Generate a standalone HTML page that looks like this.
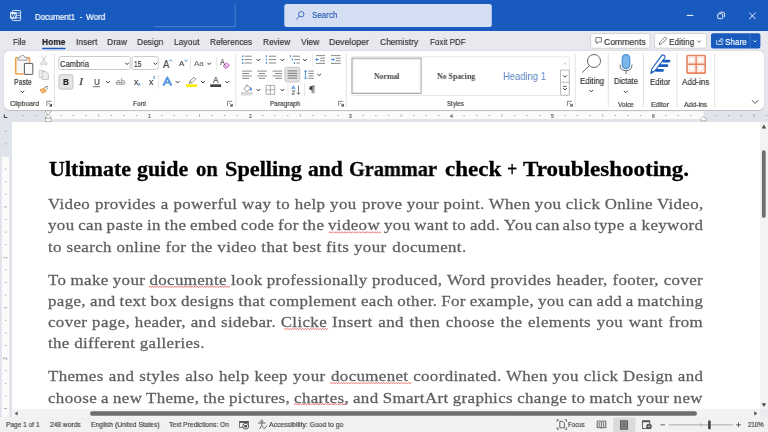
<!DOCTYPE html>
<html><head><meta charset="utf-8"><title>Document1 - Word</title>
<style>
*{box-sizing:border-box;margin:0;padding:0}
html,body{width:768px;height:432px;overflow:hidden;background:#e7e9ef;font-family:"Liberation Sans",sans-serif}
.a{position:absolute;white-space:nowrap}
.t{transform-origin:0 0;will-change:transform;-webkit-text-stroke:0.18px currentColor}
#title{left:0;top:0;width:768px;height:31px;background:#185abd}
#tabs{left:0;top:31px;width:768px;height:80px;background:#e7e9ef}
#ribbon{left:4px;top:51px;width:759.5px;height:58.7px;background:#fff;border-radius:5px;box-shadow:0 0.5px 1.5px rgba(0,0,0,.2)}
#ruler{left:0;top:111px;width:768px;height:11px;background:#dfe3ea}
#page{left:12px;top:122px;width:748px;height:287px;background:#fff}
#status{left:0;top:417px;width:768px;height:15px;background:#f1f1f1}
.s{font-family:"Liberation Serif",serif}
</style></head><body>
<div class="a" id="title"></div>
<div class="a" id="tabs"></div>
<div class="a" id="ribbon"></div>
<div class="a" id="ruler"></div>
<div class="a" id="page"></div>
<div class="a" id="status"></div>
<svg class="a" style="left:0;top:0" width="768" height="51" viewBox="0 0 768 51">
<rect x="12.3" y="10.5" width="8.3" height="10.1" rx="0.9" fill="none" stroke="#fff" stroke-width="0.9" opacity=".92"/>
<path d="M15 13.1H20.4M15 15.5H20.4M15 17.9H20.4" stroke="#fff" stroke-width="0.8" opacity=".8"/>
<rect x="10" y="12.1" width="6.7" height="6.7" rx="0.8" fill="#e3ebf8"/>
<path d="M11.2 13.8l1.05 3.5 1.1-3.2 1.1 3.2 1.05-3.5" fill="none" stroke="#185abd" stroke-width="0.95"/>
<path d="M153.5 26.7H235.2V4.5" fill="none" stroke="#5f8bd3" stroke-width="0.8"/>
<rect x="284.3" y="4" width="207.5" height="23" rx="2.5" fill="#d5dff3"/>
<circle cx="301.3" cy="14.2" r="2.7" fill="none" stroke="#2b5cb5" stroke-width="0.9"/>
<path d="M299.3 16.3L296.3 19.4" stroke="#2b5cb5" stroke-width="0.9" stroke-linecap="round"/>
<path d="M686.7 15.4H693.3" stroke="#fff" stroke-width="1"/>
<rect x="717.7" y="13.7" width="5" height="5" rx="1.3" fill="none" stroke="#fff" stroke-width="0.9"/>
<path d="M719.4 12.4Q719.8 12.2 720.4 12.2H723Q724.6 12.2 724.6 13.8V16.4Q724.6 17 724.3 17.4" fill="none" stroke="#fff" stroke-width="0.9"/>
<path d="M749.2 12.6L755.6 19M755.6 12.6L749.2 19" stroke="#fff" stroke-width="0.9"/>
<!-- home underline -->
<rect x="42" y="47.7" width="23.6" height="1.5" rx="0.7" fill="#185abd"/>
<!-- comments / editing / share buttons -->
<rect x="590.6" y="33.6" width="59.4" height="14.6" rx="2" fill="#fff" stroke="#c6c6c6" stroke-width="0.7"/>
<rect x="654.6" y="33.6" width="52" height="14.6" rx="2" fill="#fff" stroke="#c6c6c6" stroke-width="0.7"/>
<rect x="711" y="33.2" width="49.4" height="15.4" rx="2" fill="#185abd"/>
<path d="M750.2 33.4V48.4" stroke="#4a7fd0" stroke-width="0.6"/>
<!-- comment bubble icon -->
<path d="M595.8 37.6H601.4V42H598.2L596.8 43.6V42H595.8Z" fill="none" stroke="#444" stroke-width="0.7" stroke-linejoin="round"/>
<!-- pencil icon -->
<path d="M659.2 44.6L660 42.2L665.2 37L666.8 38.6L661.6 43.8Z" fill="none" stroke="#444" stroke-width="0.7" stroke-linejoin="round"/>
<!-- editing chevron -->
<path d="M697.6 40.6l1.6 1.6 1.6-1.6" fill="none" stroke="#444" stroke-width="0.8"/>
<!-- share icon -->
<path d="M716.6 40V44.4H722.4V42.6M718.6 41.8Q719 39.6 721.2 39.6V38.2L723.4 40.2L721.2 42.2V40.9Q719.6 40.8 718.6 41.8Z" fill="none" stroke="#fff" stroke-width="0.7" stroke-linejoin="round"/>
<path d="M753.4 40.4l1.6 1.6 1.6-1.6" fill="none" stroke="#fff" stroke-width="0.8"/>
</svg>

<svg class="a" style="left:0;top:51px" width="768" height="60" viewBox="0 51 768 60">
<path d="M54.40 53.5V107" stroke="#d9d9d9" stroke-width="0.8"/>
<path d="M235.80 53.5V107" stroke="#d9d9d9" stroke-width="0.8"/>
<path d="M346.30 53.5V107" stroke="#d9d9d9" stroke-width="0.8"/>
<path d="M575.20 53.5V107" stroke="#d9d9d9" stroke-width="0.8"/>
<path d="M608.30 53.5V107" stroke="#d9d9d9" stroke-width="0.8"/>
<path d="M643.40 53.5V107" stroke="#d9d9d9" stroke-width="0.8"/>
<path d="M676.90 53.5V107" stroke="#d9d9d9" stroke-width="0.8"/>
<path d="M714.60 53.5V107" stroke="#d9d9d9" stroke-width="0.8"/>
<rect x="16.2" y="58.2" width="12.8" height="15.2" fill="#f6f6f6"/>
<path d="M18.4 57.7H16.3Q15.7 57.7 15.7 58.3V73.4Q15.7 74 16.3 74H23.8M26.8 57.7H28.9Q29.5 57.7 29.5 58.3V62.6" fill="none" stroke="#f0a24a" stroke-width="1.6"/>
<path d="M18.1 60.2V57.8Q18.1 57.2 18.7 57.2H20.4Q20.7 55.1 22.55 55.1Q24.4 55.1 24.7 57.2H26.4Q27 57.2 27 57.8V60.2Z" fill="#f0f0f0" stroke="#8f8f8f" stroke-width="0.8"/>
<rect x="24.4" y="63.4" width="8.4" height="11" rx="0.5" fill="#fafafa" stroke="#5a5a5a" stroke-width="1"/>
<path d="M20.60 90.70l1.80 1.90 1.80-1.90" fill="none" stroke="#3a3a3a" stroke-width="1.0"/>
<path d="M41.4 55.4L45.4 62.6M46.2 55.4L42.2 62.6" stroke="#b5b5b5" stroke-width="0.7"/><circle cx="41.8" cy="63.8" r="1.3" fill="none" stroke="#b5b5b5" stroke-width="0.7"/><circle cx="45.8" cy="63.8" r="1.3" fill="none" stroke="#b5b5b5" stroke-width="0.7"/>
<path d="M39.2 70.4H43.6V77.6H39.2Z" fill="#f2f2f2" stroke="#bdbdbd" stroke-width="0.7"/><path d="M42.2 71.6H46L48.4 74V79.6H42.2Z" fill="#ececec" stroke="#b5b5b5" stroke-width="0.7"/>
<path d="M39.4 89.6L44.2 87.4L46.6 91.8L42.6 94Z" fill="#f0a24a"/><path d="M41.8 88.6L44.4 93" stroke="#fff" stroke-width="0.6"/><path d="M44.2 87.6L46 86.4L47.6 88.6L46 90.2" fill="#eee" stroke="#777" stroke-width="0.7"/><path d="M46.6 87L48.2 86" stroke="#777" stroke-width="1"/>
<path d="M46.80 105.90V101.30H51.40" fill="none" stroke="#555" stroke-width="0.7"/>
<path d="M48.60 103.10L51.00 105.50" fill="none" stroke="#444" stroke-width="0.8"/>
<path d="M52.00 103.50V106.50H49.00Z" fill="#3a3a3a"/>
<rect x="58.9" y="56.5" width="71.4" height="13" rx="1.8" fill="#fff" stroke="#bfbfbf" stroke-width="0.8"/>
<rect x="132.1" y="56.5" width="26.2" height="13" rx="1.8" fill="#fff" stroke="#bfbfbf" stroke-width="0.8"/>
<path d="M125.20 62.70l1.80 1.90 1.80-1.90" fill="none" stroke="#3a3a3a" stroke-width="1.0"/>
<path d="M153.60 62.70l1.80 1.90 1.80-1.90" fill="none" stroke="#3a3a3a" stroke-width="1.0"/>
<rect x="58.9" y="74.7" width="14" height="14.5" rx="2" fill="#e4e4e4" stroke="#b9b9b9" stroke-width="0.8"/>
<path d="M92.9 86.7H100" stroke="#444" stroke-width="0.8"/>
<path d="M106.00 81.10l1.80 1.90 1.80-1.90" fill="none" stroke="#3a3a3a" stroke-width="1.0"/>
<path d="M114.8 82.6H125.2" stroke="#9a9a9a" stroke-width="0.7"/>
<path d="M158.60 75V89.2" stroke="#e0e0e0" stroke-width="0.8"/>
<path d="M169.3 61.4l1.4-1.7 1.4 1.7" fill="none" stroke="#2b7cd3" stroke-width="0.8"/>
<path d="M184.6 59.7l1.4 1.7 1.4-1.7" fill="none" stroke="#2b7cd3" stroke-width="0.8"/>
<path d="M190.50 57V70" stroke="#e0e0e0" stroke-width="0.8"/>
<path d="M207.40 62.70l1.80 1.90 1.80-1.90" fill="none" stroke="#3a3a3a" stroke-width="1.0"/>
<path d="M216.60 57V70" stroke="#e0e0e0" stroke-width="0.8"/>
<path d="M223.2 66.2L226.6 62.8L229.4 65.2L226 68.6Z" fill="#f3d6f4" stroke="#c25ac6" stroke-width="1"/><path d="M224.6 64.8L227.4 67.2" stroke="#c25ac6" stroke-width="0.8"/>
<path d="M163.4 85.6L167.3 77.4L171.4 85.6M165 82.6H169.6" fill="none" stroke="#2b7cd3" stroke-width="1.9" stroke-linejoin="round"/><path d="M163.4 85.6L167.3 77.4L171.4 85.6M165 82.6H169.6" fill="none" stroke="#8ec0f2" stroke-width="0.6"/>
<path d="M175.80 81.10l1.80 1.90 1.80-1.90" fill="none" stroke="#3a3a3a" stroke-width="1.0"/>
<path d="M189 83.4L190 80.8L194.2 77.2L195.8 78.8L192 82.8Z" fill="#fff" stroke="#666" stroke-width="0.7" stroke-linejoin="round"/><path d="M190 80.8L192 82.8" stroke="#666" stroke-width="0.7"/>
<rect x="186.1" y="84.3" width="10.9" height="2.7" fill="#ffed00"/>
<path d="M201.20 81.10l1.80 1.90 1.80-1.90" fill="none" stroke="#3a3a3a" stroke-width="1.0"/>
<rect x="210.3" y="84.3" width="10.8" height="2.7" fill="#444"/>
<path d="M225.40 81.10l1.80 1.90 1.80-1.90" fill="none" stroke="#3a3a3a" stroke-width="1.0"/>
<path d="M227.50 105.90V101.30H232.10" fill="none" stroke="#555" stroke-width="0.7"/>
<path d="M229.30 103.10L231.70 105.50" fill="none" stroke="#444" stroke-width="0.8"/>
<path d="M232.70 103.50V106.50H229.70Z" fill="#3a3a3a"/>
<path d="M244.60 56.20H251.80M244.60 59.60H251.80M244.60 63.00H251.80" stroke="#6a6a6a" stroke-width="0.8"/>
<path d="M242 56.2H243.4M242 59.6H243.4M242 63H243.4" stroke="#2b7cd3" stroke-width="1.3"/>
<path d="M256.60 59.00l1.80 1.90 1.80-1.90" fill="none" stroke="#3a3a3a" stroke-width="1.0"/>
<path d="M268.80 56.20H276.10M268.80 59.60H276.10M268.80 63.00H276.10" stroke="#6a6a6a" stroke-width="0.8"/>
<path d="M266.4 55.2V57.2M266.4 58.6V60.6M266.4 62V64" stroke="#2b7cd3" stroke-width="0.9"/>
<path d="M280.60 59.00l1.80 1.90 1.80-1.90" fill="none" stroke="#3a3a3a" stroke-width="1.0"/>
<path d="M292.40 56.20H300.00" stroke="#6a6a6a" stroke-width="0.8"/>
<path d="M294.40 59.60H300.00" stroke="#6a6a6a" stroke-width="0.8"/>
<path d="M296.40 63.00H300.00" stroke="#6a6a6a" stroke-width="0.8"/>
<path d="M290.4 55.2V57.2M292.4 58.6V60.6M294.4 62V64" stroke="#2b7cd3" stroke-width="0.9"/>
<path d="M303.20 59.00l1.80 1.90 1.80-1.90" fill="none" stroke="#3a3a3a" stroke-width="1.0"/>
<path d="M312.80 54V65.8" stroke="#e0e0e0" stroke-width="0.8"/>
<path d="M316.00 55.60H325.00M316.00 63.40H325.00" stroke="#6a6a6a" stroke-width="0.8"/>
<path d="M320.20 58.20H325.00M320.20 60.80H325.00" stroke="#6a6a6a" stroke-width="0.8"/>
<path d="M319 59.5H315.8M317.2 58L315.8 59.5L317.2 61" fill="none" stroke="#2b7cd3" stroke-width="0.8"/>
<path d="M331.00 55.60H340.60M331.00 63.40H340.60" stroke="#6a6a6a" stroke-width="0.8"/>
<path d="M335.60 58.20H340.60M335.60 60.80H340.60" stroke="#6a6a6a" stroke-width="0.8"/>
<path d="M331 59.5H334.2M332.8 58L334.2 59.5L332.8 61" fill="none" stroke="#2b7cd3" stroke-width="0.8"/>
<path d="M242.20 71.10H251.80M242.20 73.50H249.20M242.20 75.90H251.80M242.20 78.30H249.20" stroke="#6a6a6a" stroke-width="0.8"/>
<path d="M257.20 71.10H266.80M258.90 73.50H265.10M257.20 75.90H266.80M258.90 78.30H265.10" stroke="#6a6a6a" stroke-width="0.8"/>
<path d="M272.60 71.10H282.00M275.20 73.50H282.00M272.60 75.90H282.00M275.20 78.30H282.00" stroke="#6a6a6a" stroke-width="0.8"/>
<rect x="285" y="67.4" width="14.8" height="14.5" rx="2" fill="#e4e4e4" stroke="#b9b9b9" stroke-width="0.8"/>
<path d="M287.60 70.90H297.40M287.60 73.30H297.40M287.60 75.70H297.40M287.60 78.10H297.40" stroke="#5a5a5a" stroke-width="0.8"/>
<path d="M305.6 70.4V79M304.2 71.8L305.6 70.4L307 71.8M304.2 77.6L305.6 79L307 77.6" fill="none" stroke="#2b7cd3" stroke-width="0.8"/>
<path d="M308.40 71.10H313.80M308.40 73.50H313.80M308.40 75.90H313.80M308.40 78.30H313.80" stroke="#6a6a6a" stroke-width="0.8"/>
<path d="M317.40 73.80l1.80 1.90 1.80-1.90" fill="none" stroke="#3a3a3a" stroke-width="1.0"/>
<path d="M244 88.6L247.4 85.2L250.6 88.4L247.2 91.6Z" fill="#fff" stroke="#666" stroke-width="0.7" stroke-linejoin="round"/><path d="M246.4 86.2V84.6" stroke="#666" stroke-width="0.7"/><path d="M250.8 87.4Q252.2 89.4 251.2 90.4Q250 90.6 250.4 88.6Z" fill="#2b7cd3" stroke="#2b7cd3" stroke-width="0.5"/>
<rect x="241.6" y="92.4" width="10.4" height="2.6" fill="#dedede" stroke="#bdbdbd" stroke-width="0.5"/>
<path d="M256.60 89.00l1.80 1.90 1.80-1.90" fill="none" stroke="#3a3a3a" stroke-width="1.0"/>
<path d="M266.1 85.4H274.7V94.3H266.1ZM270.4 85.4V94.3M266.1 89.85H274.7" fill="none" stroke="#8a8a8a" stroke-width="0.7"/>
<path d="M280.60 89.00l1.80 1.90 1.80-1.90" fill="none" stroke="#3a3a3a" stroke-width="1.0"/>
<path d="M288.00 83V96.4" stroke="#e0e0e0" stroke-width="0.8"/>
<path d="M291.7 89.2L293.4 85.8L295.1 89.2M292.3 88.1H294.5" fill="none" stroke="#2b7cd3" stroke-width="0.8"/>
<path d="M291.9 90.8H294.9L291.9 94.2H294.9" fill="none" stroke="#555" stroke-width="0.8"/>
<path d="M298.5 85.6V94.2M296.9 92.6L298.5 94.4L300.1 92.6" fill="none" stroke="#555" stroke-width="0.8"/>
<path d="M304.60 83V96.4" stroke="#e0e0e0" stroke-width="0.8"/>
<path d="M312.2 93.2V86H314.6M313.9 93.2V86" fill="none" stroke="#444" stroke-width="0.8"/><path d="M312.4 86H311.6Q309.2 86 309.2 88.2Q309.2 90.2 311.6 90.2H312.4Z" fill="#444"/>
<path d="M338.60 105.90V101.30H343.20" fill="none" stroke="#555" stroke-width="0.7"/>
<path d="M340.40 103.10L342.80 105.50" fill="none" stroke="#444" stroke-width="0.8"/>
<path d="M343.80 103.50V106.50H340.80Z" fill="#3a3a3a"/>
<rect x="351.4" y="56.8" width="218" height="38.6" rx="1.5" fill="#fff" stroke="#dedede" stroke-width="0.8"/>
<rect x="352.1" y="58.2" width="69" height="35.2" fill="#fff" stroke="#a8a8a8" stroke-width="1.1"/>
<rect x="353.1" y="59.2" width="67" height="33.2" fill="none" stroke="#e2e2e2" stroke-width="0.7"/>
<path d="M560.5 70.1H569.3V82.3H560.5ZM560.5 82.3V94.4Q560.5 95.3 561.4 95.3H568.4Q569.3 95.3 569.3 94.4V82.3" fill="#fff" stroke="#a0a0a0" stroke-width="0.7"/>
<path d="M563.2 64.6l1.7-1.8 1.7 1.8" fill="none" stroke="#c4c4c4" stroke-width="0.8"/>
<path d="M563.20 75.40l1.80 1.90 1.80-1.90" fill="none" stroke="#3a3a3a" stroke-width="1.0"/>
<path d="M563 86.4H566.8" stroke="#444" stroke-width="0.8"/>
<path d="M563.20 88.20l1.80 1.70 1.80-1.70" fill="none" stroke="#3a3a3a" stroke-width="1.0"/>
<path d="M567.40 105.90V101.30H572.00" fill="none" stroke="#555" stroke-width="0.7"/>
<path d="M569.20 103.10L571.60 105.50" fill="none" stroke="#444" stroke-width="0.8"/>
<path d="M572.60 103.50V106.50H569.60Z" fill="#3a3a3a"/>
<circle cx="594" cy="61" r="6.5" fill="none" stroke="#555" stroke-width="0.9"/><path d="M589.3 65.7L582.2 72.6" stroke="#555" stroke-width="0.9"/>
<path d="M589.50 90.00l1.80 1.90 1.80-1.90" fill="none" stroke="#3a3a3a" stroke-width="1.0"/>
<rect x="622.2" y="54.4" width="7.6" height="14.4" rx="3.8" fill="#7db7ea" stroke="#2b7cd3" stroke-width="0.9"/>
<path d="M620 64.6Q620 70.7 626 70.7Q632 70.7 632 64.6M626 70.7V74" fill="none" stroke="#555" stroke-width="0.9"/>
<path d="M623.90 90.80l1.80 1.90 1.80-1.90" fill="none" stroke="#3a3a3a" stroke-width="1.0"/>
<path d="M650.8 73.4L652 68.8L661.6 55.6Q662.6 54.4 663.8 55.2L664.6 55.8Q665.6 56.8 664.8 58L655 70.8Z" fill="#fff" stroke="#185abd" stroke-width="1.1" stroke-linejoin="round"/>
<path d="M650.8 73.4L651.5 70.6L653.6 72.2Z" fill="#185abd"/>
<path d="M663.4 61.1H669M659.8 65.6H667M656.4 70.4H662.6" stroke="#185abd" stroke-width="2.6" stroke-linecap="round"/>
<rect x="687" y="55.5" width="18.2" height="17.6" rx="0.8" fill="#fff" stroke="#e8815c" stroke-width="1.6"/>
<path d="M696.1 55.5V73.1M687 64.3H705.2" stroke="#e8815c" stroke-width="1.4"/>
<path d="M689 57.4H694.4V62.6H689ZM697.8 57.4H703.2V62.6H697.8ZM689 66H694.4V71.2H689ZM697.8 66H703.2V71.2H697.8Z" fill="#fff" stroke="#f3b9a2" stroke-width="0.5"/>
<path d="M752.00 100.20l3.00 3.20 3.00-3.20" fill="none" stroke="#3a3a3a" stroke-width="0.9"/>
</svg>
<svg class="a" style="left:0;top:109px" width="768" height="309" viewBox="0 109 768 309">
<rect x="48.3" y="111.2" width="655.2" height="7.9" fill="#fbfbfc"/>
<path d="M4.4 114.4V117.5H7.3" fill="none" stroke="#444" stroke-width="1.1"/>
<path d="M22.40 115.55H23.80M35.00 115.55H36.40M60.20 115.55H61.60M72.80 115.55H74.20M85.40 115.55H86.80M110.60 115.55H112.00M123.20 115.55H124.60M135.80 115.55H137.20M161.00 115.55H162.40M173.60 115.55H175.00M186.20 115.55H187.60M211.40 115.55H212.80M224.00 115.55H225.40M236.60 115.55H238.00M261.80 115.55H263.20M274.40 115.55H275.80M287.00 115.55H288.40M312.20 115.55H313.60M324.80 115.55H326.20M337.40 115.55H338.80M362.60 115.55H364.00M375.20 115.55H376.60M387.80 115.55H389.20M413.00 115.55H414.40M425.60 115.55H427.00M438.20 115.55H439.60M463.40 115.55H464.80M476.00 115.55H477.40M488.60 115.55H490.00M513.80 115.55H515.20M526.40 115.55H527.80M539.00 115.55H540.40M564.20 115.55H565.60M576.80 115.55H578.20M589.40 115.55H590.80M614.60 115.55H616.00M627.20 115.55H628.60M639.80 115.55H641.20M665.00 115.55H666.40M677.60 115.55H679.00M690.20 115.55H691.60M715.40 115.55H716.80M728.00 115.55H729.40M740.60 115.55H742.00M765.80 115.55H767.20" stroke="#9a9da2" stroke-width="0.9"/>
<path d="M98.70 114.2V116.8M199.50 114.2V116.8M300.30 114.2V116.8M401.10 114.2V116.8M501.90 114.2V116.8M602.70 114.2V116.8M753.90 114.2V116.8" stroke="#8a8d92" stroke-width="0.7"/>
<path d="M45.5 110.8H51.099999999999994V112L48.3 114.6L45.5 112Z" fill="#fff" stroke="#8a8a8a" stroke-width="0.6"/>
<path d="M45.5 118.2V117L48.3 114.6L51.099999999999994 117V118.2Z" fill="#fff" stroke="#8a8a8a" stroke-width="0.6"/>
<rect x="45.5" y="118.2" width="5.6" height="3.4" fill="#fff" stroke="#8a8a8a" stroke-width="0.6"/>
<path d="M700.7 120.8V119.2L703.5 116.4L706.3 119.2V120.8Z" fill="#fff" stroke="#8a8a8a" stroke-width="0.6"/>
<rect x="0" y="122" width="12" height="295" fill="#dfe3ea"/>
<rect x="1.9" y="156.8" width="7.4" height="260" fill="#fbfbfc"/>
<path d="M4.8 131.30H6.4M4.8 143.90H6.4M4.8 169.10H6.4M4.8 181.70H6.4M4.8 194.30H6.4M4.2 206.90H7M4.8 219.50H6.4M4.8 232.10H6.4M4.8 244.70H6.4M4.8 269.90H6.4M4.8 282.50H6.4M4.8 295.10H6.4M4.2 307.70H7M4.8 320.30H6.4M4.8 332.90H6.4M4.8 345.50H6.4M4.8 370.70H6.4M4.8 383.30H6.4M4.8 395.90H6.4M4.2 408.50H7" stroke="#8a8d92" stroke-width="0.7"/>
<rect x="760" y="122" width="8" height="287" fill="#f3f3f3"/>
<rect x="761.9" y="150.2" width="3.8" height="67.6" rx="1.9" fill="#6e6e6e"/>
<path d="M761.6 128.4L763.9 124.6L766.2 128.4Z" fill="#505050"/>
<path d="M761.6 403.2L763.9 407L766.2 403.2Z" fill="#505050"/>
<rect x="12" y="409" width="748" height="8.2" fill="#f3f3f3"/>
<rect x="760" y="409" width="8" height="8.2" fill="#e9ebf0"/>
<rect x="90" y="411.3" width="607" height="4.4" rx="2.2" fill="#6e6e6e"/>
<path d="M17.6 411.6L14.6 413.6L17.6 415.6Z" fill="#555"/>
<path d="M754.2 411.2L757.4 413.4L754.2 415.6Z" fill="#555"/>
<path d="M328.60 233.15L329.85 231.65L331.10 233.15L332.35 231.65L333.60 233.15L334.85 231.65L336.10 233.15L337.35 231.65L338.60 233.15L339.85 231.65L341.10 233.15L342.35 231.65L343.60 233.15L344.85 231.65L346.10 233.15L347.35 231.65L348.60 233.15L349.85 231.65L351.10 233.15L352.35 231.65L353.60 233.15L354.85 231.65L356.10 233.15L357.35 231.65L358.60 233.15L359.85 231.65L361.10 233.15L362.35 231.65L363.60 233.15L364.85 231.65L366.10 233.15L367.35 231.65L368.60 233.15L369.85 231.65L371.10 233.15L372.35 231.65L373.60 233.15L374.85 231.65L376.10 233.15L377.35 231.65L378.60 233.15L379.85 231.65L381.10 233.15" fill="none" stroke="#e8403a" stroke-width="0.75" opacity=".85"/>
<path d="M148.60 287.55L149.85 286.05L151.10 287.55L152.35 286.05L153.60 287.55L154.85 286.05L156.10 287.55L157.35 286.05L158.60 287.55L159.85 286.05L161.10 287.55L162.35 286.05L163.60 287.55L164.85 286.05L166.10 287.55L167.35 286.05L168.60 287.55L169.85 286.05L171.10 287.55L172.35 286.05L173.60 287.55L174.85 286.05L176.10 287.55L177.35 286.05L178.60 287.55L179.85 286.05L181.10 287.55L182.35 286.05L183.60 287.55L184.85 286.05L186.10 287.55L187.35 286.05L188.60 287.55L189.85 286.05L191.10 287.55L192.35 286.05L193.60 287.55L194.85 286.05L196.10 287.55L197.35 286.05L198.60 287.55L199.85 286.05L201.10 287.55L202.35 286.05L203.60 287.55L204.85 286.05L206.10 287.55L207.35 286.05L208.60 287.55L209.85 286.05L211.10 287.55L212.35 286.05L213.60 287.55L214.85 286.05L216.10 287.55L217.35 286.05L218.60 287.55L219.85 286.05L221.10 287.55L222.35 286.05L223.60 287.55L224.85 286.05L226.10 287.55L227.35 286.05L228.60 287.55L229.85 286.05" fill="none" stroke="#e8403a" stroke-width="0.75" opacity=".85"/>
<path d="M284.00 329.75L285.25 328.25L286.50 329.75L287.75 328.25L289.00 329.75L290.25 328.25L291.50 329.75L292.75 328.25L294.00 329.75L295.25 328.25L296.50 329.75L297.75 328.25L299.00 329.75L300.25 328.25L301.50 329.75L302.75 328.25L304.00 329.75L305.25 328.25L306.50 329.75L307.75 328.25L309.00 329.75L310.25 328.25L311.50 329.75L312.75 328.25L314.00 329.75L315.25 328.25L316.50 329.75L317.75 328.25L319.00 329.75L320.25 328.25L321.50 329.75L322.75 328.25L324.00 329.75L325.25 328.25L326.50 329.75L327.75 328.25" fill="none" stroke="#e8403a" stroke-width="0.75" opacity=".85"/>
<path d="M330.00 383.85L331.25 382.35L332.50 383.85L333.75 382.35L335.00 383.85L336.25 382.35L337.50 383.85L338.75 382.35L340.00 383.85L341.25 382.35L342.50 383.85L343.75 382.35L345.00 383.85L346.25 382.35L347.50 383.85L348.75 382.35L350.00 383.85L351.25 382.35L352.50 383.85L353.75 382.35L355.00 383.85L356.25 382.35L357.50 383.85L358.75 382.35L360.00 383.85L361.25 382.35L362.50 383.85L363.75 382.35L365.00 383.85L366.25 382.35L367.50 383.85L368.75 382.35L370.00 383.85L371.25 382.35L372.50 383.85L373.75 382.35L375.00 383.85L376.25 382.35L377.50 383.85L378.75 382.35L380.00 383.85L381.25 382.35L382.50 383.85L383.75 382.35L385.00 383.85L386.25 382.35L387.50 383.85L388.75 382.35L390.00 383.85L391.25 382.35L392.50 383.85L393.75 382.35L395.00 383.85L396.25 382.35L397.50 383.85L398.75 382.35L400.00 383.85L401.25 382.35L402.50 383.85L403.75 382.35L405.00 383.85L406.25 382.35L407.50 383.85L408.75 382.35L410.00 383.85L411.25 382.35" fill="none" stroke="#e8403a" stroke-width="0.75" opacity=".85"/>
<path d="M294.00 405.05L295.25 403.55L296.50 405.05L297.75 403.55L299.00 405.05L300.25 403.55L301.50 405.05L302.75 403.55L304.00 405.05L305.25 403.55L306.50 405.05L307.75 403.55L309.00 405.05L310.25 403.55L311.50 405.05L312.75 403.55L314.00 405.05L315.25 403.55L316.50 405.05L317.75 403.55L319.00 405.05L320.25 403.55L321.50 405.05L322.75 403.55L324.00 405.05L325.25 403.55L326.50 405.05L327.75 403.55L329.00 405.05L330.25 403.55L331.50 405.05L332.75 403.55L334.00 405.05L335.25 403.55L336.50 405.05L337.75 403.55L339.00 405.05L340.25 403.55L341.50 405.05L342.75 403.55L344.00 405.05L345.25 403.55L346.50 405.05" fill="none" stroke="#e8403a" stroke-width="0.75" opacity=".85"/>
<text x="5.6" y="257.7" transform="rotate(-90 5.6 257.7)" text-anchor="middle" dominant-baseline="central" font-size="4.6" fill="#666" font-family="Liberation Sans, sans-serif">1</text>
<text x="5.6" y="358.5" transform="rotate(-90 5.6 358.5)" text-anchor="middle" dominant-baseline="central" font-size="4.6" fill="#666" font-family="Liberation Sans, sans-serif">2</text>
</svg>
<svg class="a" style="left:0;top:417px" width="768" height="15" viewBox="0 417 768 15">
<!-- macro icon -->
<rect x="239.6" y="421.4" width="8.8" height="6" fill="#f1f1f1" stroke="#555" stroke-width="0.8"/>
<rect x="239.6" y="421.2" width="8.8" height="1.8" fill="#555"/>
<circle cx="245.7" cy="426.2" r="2.9" fill="#f1f1f1" stroke="#444" stroke-width="0.9"/>
<circle cx="245.7" cy="426.2" r="1.3" fill="#333"/>
<!-- accessibility icon -->
<circle cx="261.8" cy="421.2" r="1.1" fill="none" stroke="#444" stroke-width="0.7"/>
<path d="M258 423H265.6M261.8 423V425.6M261.8 425.6L259.6 428.8M262.2 425.6L263 426.8M262.8 427.4L264.2 428.8L267 425.6" fill="none" stroke="#444" stroke-width="0.8"/>
<!-- focus icon -->
<path d="M557.2 421.6V419.8H559M564.8 419.8H566.6V421.6M566.6 427.4V429.2H564.8M559 429.2H557.2V427.4" fill="none" stroke="#444" stroke-width="0.8"/>
<path d="M559.8 421.4H562.8L564.4 423V427.8H559.8Z" fill="none" stroke="#444" stroke-width="0.8"/>
<!-- read mode -->
<path d="M597.2 421.2Q599.4 420.6 601.4 421.4Q603.4 420.6 605.8 421.2V427.8Q603.4 427.2 601.4 428Q599.4 427.2 597.2 427.8Z" fill="#e6e6e6" stroke="#444" stroke-width="0.8"/>
<path d="M601.4 421.4V428M599.2 422.2V426.8M603.6 422.2V426.8" stroke="#444" stroke-width="0.7"/>
<!-- print layout selected -->
<rect x="613.3" y="417.6" width="22.1" height="14.4" fill="#dadada"/>
<rect x="620.6" y="420.8" width="7" height="8.4" fill="#8a8a8a" stroke="#444" stroke-width="0.8"/>
<path d="M622 423H626.2M622 424.8H626.2M622 426.6H626.2" stroke="#555" stroke-width="0.6"/>
<!-- web layout -->
<rect x="642.4" y="420.8" width="7.4" height="7.6" fill="#f1f1f1" stroke="#444" stroke-width="0.8"/>
<rect x="642.4" y="420.6" width="7.4" height="1.6" fill="#555"/>
<circle cx="649" cy="426.4" r="2.7" fill="#444"/>
<path d="M649 424.4V428.4M647.2 426.4H650.8" stroke="#f1f1f1" stroke-width="0.5"/>
<!-- zoom slider -->
<path d="M660.6 424.8H665" stroke="#444" stroke-width="0.8"/>
<path d="M668.8 424.8H733" stroke="#9a9a9a" stroke-width="0.8"/>
<path d="M700.9 423.2V426.4" stroke="#9a9a9a" stroke-width="0.8"/>
<rect x="708.1" y="420.4" width="2.6" height="8.8" rx="0.6" fill="#444"/>
<path d="M736.1 424.8H740.9M738.5 422.4V427.2" stroke="#444" stroke-width="0.8"/>
</svg>

<div class="a t" style="left:34.60px;top:13.02px;font-size:8.6px;line-height:8.6px;color:#fff;transform:scaleX(0.9101);">Document1</div>
<div class="a t" style="left:80.00px;top:13.02px;font-size:8.6px;line-height:8.6px;color:#fff;transform:scaleX(0.7652);">-</div>
<div class="a t" style="left:86.30px;top:13.02px;font-size:8.6px;line-height:8.6px;color:#fff;transform:scaleX(0.9563);">Word</div>
<div class="a t" style="left:311.80px;top:11.13px;font-size:9.3px;line-height:9.3px;color:#2b5cb5;transform:scaleX(0.8619);">Search</div>
<div class="a t" style="left:13.40px;top:36.52px;font-size:9.9px;line-height:9.9px;color:#333;transform:scaleX(0.7914);">File</div>
<div class="a t" style="left:42.00px;top:36.52px;font-size:9.9px;line-height:9.9px;color:#222;font-weight:bold;transform:scaleX(0.8492);">Home</div>
<div class="a t" style="left:75.70px;top:36.52px;font-size:9.9px;line-height:9.9px;color:#333;transform:scaleX(0.8622);">Insert</div>
<div class="a t" style="left:107.40px;top:36.52px;font-size:9.9px;line-height:9.9px;color:#333;transform:scaleX(0.8635);">Draw</div>
<div class="a t" style="left:137.40px;top:36.52px;font-size:9.9px;line-height:9.9px;color:#333;transform:scaleX(0.8553);">Design</div>
<div class="a t" style="left:174.30px;top:36.52px;font-size:9.9px;line-height:9.9px;color:#333;transform:scaleX(0.8565);">Layout</div>
<div class="a t" style="left:210.20px;top:36.52px;font-size:9.9px;line-height:9.9px;color:#333;transform:scaleX(0.8337);">References</div>
<div class="a t" style="left:262.80px;top:36.52px;font-size:9.9px;line-height:9.9px;color:#333;transform:scaleX(0.8397);">Review</div>
<div class="a t" style="left:300.60px;top:36.52px;font-size:9.9px;line-height:9.9px;color:#333;transform:scaleX(0.8665);">View</div>
<div class="a t" style="left:329.40px;top:36.52px;font-size:9.9px;line-height:9.9px;color:#333;transform:scaleX(0.8864);">Developer</div>
<div class="a t" style="left:380.10px;top:36.52px;font-size:9.9px;line-height:9.9px;color:#333;transform:scaleX(0.8593);">Chemistry</div>
<div class="a t" style="left:430.00px;top:36.52px;font-size:9.9px;line-height:9.9px;color:#333;transform:scaleX(0.8131);">Foxit PDF</div>
<div class="a t" style="left:603.50px;top:36.52px;font-size:9.9px;line-height:9.9px;color:#333;transform:scaleX(0.8754);">Comments</div>
<div class="a t" style="left:669.00px;top:36.52px;font-size:9.9px;line-height:9.9px;color:#333;transform:scaleX(0.8377);">Editing</div>
<div class="a t" style="left:725.00px;top:36.52px;font-size:9.9px;line-height:9.9px;color:#fff;transform:scaleX(0.8270);">Share</div>
<div class="a t" style="left:13.80px;top:77.60px;font-size:8.5px;line-height:8.5px;color:#333;transform:scaleX(0.8138);">Paste</div>
<div class="a t" style="left:60.20px;top:59.70px;font-size:8.5px;line-height:8.5px;color:#333;transform:scaleX(0.8996);">Cambria</div>
<div class="a t" style="left:133.50px;top:59.70px;font-size:8.5px;line-height:8.5px;color:#333;transform:scaleX(0.7921);">15</div>
<div class="a t" style="left:579.50px;top:76.60px;font-size:8.5px;line-height:8.5px;color:#333;transform:scaleX(0.9269);">Editing</div>
<div class="a t" style="left:614.00px;top:76.60px;font-size:8.5px;line-height:8.5px;color:#333;transform:scaleX(0.9067);">Dictate</div>
<div class="a t" style="left:650.00px;top:77.60px;font-size:8.5px;line-height:8.5px;color:#333;transform:scaleX(0.9181);">Editor</div>
<div class="a t" style="left:682.30px;top:77.60px;font-size:8.5px;line-height:8.5px;color:#333;transform:scaleX(0.9470);">Add-ins</div>
<div class="a t" style="left:10.00px;top:99.92px;font-size:7.3px;line-height:7.3px;color:#3a3a3a;transform:scaleX(0.9317);">Clipboard</div>
<div class="a t" style="left:133.00px;top:99.92px;font-size:7.3px;line-height:7.3px;color:#3a3a3a;transform:scaleX(0.8967);">Font</div>
<div class="a t" style="left:270.30px;top:99.92px;font-size:7.3px;line-height:7.3px;color:#3a3a3a;transform:scaleX(0.8862);">Paragraph</div>
<div class="a t" style="left:447.30px;top:99.92px;font-size:7.3px;line-height:7.3px;color:#3a3a3a;transform:scaleX(0.8453);">Styles</div>
<div class="a t" style="left:617.80px;top:100.92px;font-size:7.3px;line-height:7.3px;color:#3a3a3a;transform:scaleX(0.8847);">Voice</div>
<div class="a t" style="left:651.00px;top:100.92px;font-size:7.3px;line-height:7.3px;color:#3a3a3a;transform:scaleX(0.9443);">Editor</div>
<div class="a t" style="left:684.40px;top:100.92px;font-size:7.3px;line-height:7.3px;color:#3a3a3a;transform:scaleX(0.9333);">Add-ins</div>
<div class="a t s" style="left:373.80px;top:73.17px;font-size:8.4px;line-height:8.4px;color:#444;font-weight:bold;transform:scaleX(0.9289);-webkit-text-stroke:0;">Normal</div>
<div class="a t s" style="left:436.60px;top:73.17px;font-size:8.4px;line-height:8.4px;color:#444;font-weight:bold;transform:scaleX(0.9378);-webkit-text-stroke:0;">No Spacing</div>
<div class="a t" style="left:503.30px;top:71.77px;font-size:10.2px;line-height:10.2px;color:#5b84c4;transform:scaleX(0.9257);-webkit-text-stroke:0;">Heading 1</div>
<div class="a t" style="left:63.20px;top:76.82px;font-size:9.9px;line-height:9.9px;color:#222;font-weight:bold;transform:scaleX(0.8123);">B</div>
<div class="a t s" style="left:79.10px;top:76.86px;font-size:10.2px;line-height:10.2px;color:#444;font-style:italic;transform:scaleX(1.2330);">I</div>
<div class="a t" style="left:93.60px;top:76.82px;font-size:9.9px;line-height:9.9px;color:#444;transform:scaleX(0.8123);">U</div>
<div class="a t" style="left:115.50px;top:78.02px;font-size:8.6px;line-height:8.6px;color:#9a9a9a;transform:scaleX(0.9621);">ab</div>
<div class="a t" style="left:133.60px;top:77.52px;font-size:8.6px;line-height:8.6px;color:#444;transform:scaleX(1.0240);">x</div>
<div class="a t" style="left:138.00px;top:83.24px;font-size:4.2px;line-height:4.2px;color:#2b7cd3;transform:scaleX(1.0240);">2</div>
<div class="a t" style="left:148.60px;top:77.52px;font-size:8.6px;line-height:8.6px;color:#444;transform:scaleX(1.0240);">x</div>
<div class="a t" style="left:153.30px;top:76.44px;font-size:4.2px;line-height:4.2px;color:#2b7cd3;transform:scaleX(0.9387);">2</div>
<div class="a t" style="left:163.00px;top:59.95px;font-size:10.1px;line-height:10.1px;color:#444;transform:scaleX(0.9355);">A</div>
<div class="a t" style="left:179.30px;top:60.23px;font-size:8px;line-height:8px;color:#444;transform:scaleX(0.9731);">A</div>
<div class="a t" style="left:194.30px;top:59.57px;font-size:7.6px;line-height:7.6px;color:#777;transform:scaleX(1.0326);">Aa</div>
<div class="a t" style="left:220.00px;top:58.18px;font-size:9px;line-height:9px;color:#555;transform:scaleX(0.8145);">A</div>
<div class="a t" style="left:213.00px;top:75.68px;font-size:9px;line-height:9px;color:#444;transform:scaleX(0.9309);">A</div>
<div class="a t" style="left:5.80px;top:421.27px;font-size:7.0px;line-height:7.0px;color:#444;transform:scaleX(0.9354);">Page 1 of 1</div>
<div class="a t" style="left:50.00px;top:421.27px;font-size:7.0px;line-height:7.0px;color:#444;transform:scaleX(0.9506);">248 words</div>
<div class="a t" style="left:90.80px;top:421.27px;font-size:7.0px;line-height:7.0px;color:#444;transform:scaleX(0.9596);">English (United States)</div>
<div class="a t" style="left:168.70px;top:421.27px;font-size:7.0px;line-height:7.0px;color:#444;transform:scaleX(0.9578);">Text Predictions: On</div>
<div class="a t" style="left:268.70px;top:421.27px;font-size:7.0px;line-height:7.0px;color:#444;transform:scaleX(0.9693);">Accessibility: Good to go</div>
<div class="a t" style="left:568.20px;top:421.27px;font-size:7.0px;line-height:7.0px;color:#444;transform:scaleX(0.8708);">Focus</div>
<div class="a t" style="left:748.00px;top:421.27px;font-size:7.0px;line-height:7.0px;color:#444;transform:scaleX(0.8712);">210%</div>
<div class="a t" style="left:147.70px;top:112.72px;font-size:6.0px;line-height:6.0px;color:#555;transform:scaleX(0.8374);">1</div>
<div class="a t" style="left:248.50px;top:112.72px;font-size:6.0px;line-height:6.0px;color:#555;transform:scaleX(0.8374);">2</div>
<div class="a t" style="left:349.30px;top:112.72px;font-size:6.0px;line-height:6.0px;color:#555;transform:scaleX(0.8374);">3</div>
<div class="a t" style="left:450.10px;top:112.72px;font-size:6.0px;line-height:6.0px;color:#555;transform:scaleX(0.8374);">4</div>
<div class="a t" style="left:550.90px;top:112.72px;font-size:6.0px;line-height:6.0px;color:#555;transform:scaleX(0.8374);">5</div>
<div class="a t" style="left:651.70px;top:112.72px;font-size:6.0px;line-height:6.0px;color:#555;transform:scaleX(0.8374);">6</div>
<div class="a t s" style="left:48.50px;top:158.91px;font-size:21px;line-height:21px;color:#000;font-weight:bold;transform:scaleX(1.0507);-webkit-text-stroke:0.3px #000;">Ultimate</div>
<div class="a t s" style="left:136.80px;top:158.91px;font-size:21px;line-height:21px;color:#000;font-weight:bold;transform:scaleX(1.0425);-webkit-text-stroke:0.3px #000;">guide</div>
<div class="a t s" style="left:195.50px;top:158.91px;font-size:21px;line-height:21px;color:#000;font-weight:bold;transform:scaleX(0.9825);-webkit-text-stroke:0.3px #000;">on</div>
<div class="a t s" style="left:224.80px;top:158.91px;font-size:21px;line-height:21px;color:#000;font-weight:bold;transform:scaleX(1.0611);-webkit-text-stroke:0.3px #000;">Spelling</div>
<div class="a t s" style="left:307.80px;top:158.91px;font-size:21px;line-height:21px;color:#000;font-weight:bold;transform:scaleX(1.0278);-webkit-text-stroke:0.3px #000;">and</div>
<div class="a t s" style="left:348.80px;top:158.91px;font-size:21px;line-height:21px;color:#000;font-weight:bold;transform:scaleX(0.9652);-webkit-text-stroke:0.3px #000;">Grammar</div>
<div class="a t s" style="left:445.00px;top:158.91px;font-size:21px;line-height:21px;color:#000;font-weight:bold;transform:scaleX(1.0969);-webkit-text-stroke:0.3px #000;">check</div>
<div class="a t s" style="left:507.40px;top:158.91px;font-size:21px;line-height:21px;color:#000;font-weight:bold;transform:scaleX(0.8606);-webkit-text-stroke:0.3px #000;">+</div>
<div class="a t s" style="left:522.80px;top:158.91px;font-size:21px;line-height:21px;color:#000;font-weight:bold;transform:scaleX(1.0963);-webkit-text-stroke:0.3px #000;">Troubleshooting.</div>
<div class="a t s" style="left:48.30px;top:196.42px;font-size:15.5px;line-height:15.5px;color:#5e5e5e;transform:scaleX(1.0900);letter-spacing:0.336px;word-spacing:0.167px;-webkit-text-stroke:0.27px #5e5e5e;white-space:pre;">Video provides a powerful way to help you </div>
<div class="a t s" style="left:361.60px;top:196.42px;font-size:15.5px;line-height:15.5px;color:#5e5e5e;transform:scaleX(1.0900);letter-spacing:0.336px;word-spacing:-0.210px;-webkit-text-stroke:0.27px #5e5e5e;white-space:pre;">prove your point. When you click Online Video,</div>
<div class="a t s" style="left:48.30px;top:217.42px;font-size:15.5px;line-height:15.5px;color:#5e5e5e;transform:scaleX(1.0900);letter-spacing:0.336px;word-spacing:-0.730px;-webkit-text-stroke:0.27px #5e5e5e;white-space:pre;">you can paste in the embed code for the videow </div>
<div class="a t s" style="left:384.10px;top:217.42px;font-size:15.5px;line-height:15.5px;color:#5e5e5e;transform:scaleX(1.0900);letter-spacing:0.336px;word-spacing:-0.752px;-webkit-text-stroke:0.27px #5e5e5e;white-space:pre;">you want to add. </div>
<div class="a t s" style="left:503.90px;top:217.42px;font-size:15.5px;line-height:15.5px;color:#5e5e5e;transform:scaleX(1.0900);letter-spacing:0.336px;word-spacing:-1.683px;-webkit-text-stroke:0.27px #5e5e5e;white-space:pre;">You can also </div>
<div class="a t s" style="left:593.90px;top:217.42px;font-size:15.5px;line-height:15.5px;color:#5e5e5e;transform:scaleX(1.0900);letter-spacing:0.336px;word-spacing:0.004px;-webkit-text-stroke:0.27px #5e5e5e;white-space:pre;">type a keyword</div>
<div class="a t s" style="left:48.30px;top:238.52px;font-size:15.5px;line-height:15.5px;color:#5e5e5e;transform:scaleX(1.0900);letter-spacing:0.336px;word-spacing:0.042px;-webkit-text-stroke:0.27px #5e5e5e;white-space:pre;">to search online for the video that best fits </div>
<div class="a t s" style="left:354.10px;top:238.52px;font-size:15.5px;line-height:15.5px;color:#5e5e5e;transform:scaleX(1.0900);letter-spacing:0.336px;word-spacing:1.210px;-webkit-text-stroke:0.27px #5e5e5e;white-space:pre;">your document.</div>
<div class="a t s" style="left:48.30px;top:272.02px;font-size:15.5px;line-height:15.5px;color:#5e5e5e;transform:scaleX(1.0900);letter-spacing:0.336px;word-spacing:-0.356px;-webkit-text-stroke:0.27px #5e5e5e;white-space:pre;">To make your documente look professionally </div>
<div class="a t s" style="left:372.10px;top:272.02px;font-size:15.5px;line-height:15.5px;color:#5e5e5e;transform:scaleX(1.0900);letter-spacing:0.336px;word-spacing:0.266px;-webkit-text-stroke:0.27px #5e5e5e;white-space:pre;">produced, Word provides header, footer, cover</div>
<div class="a t s" style="left:48.30px;top:293.12px;font-size:15.5px;line-height:15.5px;color:#5e5e5e;transform:scaleX(1.0900);letter-spacing:0.336px;word-spacing:-0.458px;-webkit-text-stroke:0.27px #5e5e5e;white-space:pre;">page, and text box designs that complement </div>
<div class="a t s" style="left:360.85px;top:293.12px;font-size:15.5px;line-height:15.5px;color:#5e5e5e;transform:scaleX(1.0900);letter-spacing:0.336px;word-spacing:-0.698px;-webkit-text-stroke:0.27px #5e5e5e;white-space:pre;">each other. For example, you can add a matching</div>
<div class="a t s" style="left:48.30px;top:314.22px;font-size:15.5px;line-height:15.5px;color:#5e5e5e;transform:scaleX(1.0900);letter-spacing:0.336px;word-spacing:0.157px;-webkit-text-stroke:0.27px #5e5e5e;white-space:pre;">cover page, header, and sidebar. Clicke </div>
<div class="a t s" style="left:332.10px;top:314.22px;font-size:15.5px;line-height:15.5px;color:#5e5e5e;transform:scaleX(1.0900);letter-spacing:0.336px;word-spacing:1.007px;-webkit-text-stroke:0.27px #5e5e5e;white-space:pre;">Insert and then choose the elements you want from</div>
<div class="a t s" style="left:48.30px;top:335.32px;font-size:15.5px;line-height:15.5px;color:#5e5e5e;transform:scaleX(1.0900);letter-spacing:0.336px;word-spacing:-0.130px;-webkit-text-stroke:0.27px #5e5e5e;white-space:pre;">the different galleries.</div>
<div class="a t s" style="left:48.30px;top:368.32px;font-size:15.5px;line-height:15.5px;color:#5e5e5e;transform:scaleX(1.0900);letter-spacing:0.336px;word-spacing:0.464px;-webkit-text-stroke:0.27px #5e5e5e;white-space:pre;">Themes and styles also help keep your </div>
<div class="a t s" style="left:330.85px;top:368.32px;font-size:15.5px;line-height:15.5px;color:#5e5e5e;transform:scaleX(1.0900);letter-spacing:0.336px;word-spacing:0.132px;-webkit-text-stroke:0.27px #5e5e5e;white-space:pre;">documenet coordinated. When you click Design and</div>
<div class="a t s" style="left:48.30px;top:389.52px;font-size:15.5px;line-height:15.5px;color:#5e5e5e;transform:scaleX(1.0900);letter-spacing:0.336px;word-spacing:-0.532px;-webkit-text-stroke:0.27px #5e5e5e;white-space:pre;">choose a new Theme, the pictures, chartes, </div>
<div class="a t s" style="left:353.35px;top:389.52px;font-size:15.5px;line-height:15.5px;color:#5e5e5e;transform:scaleX(1.0900);letter-spacing:0.336px;word-spacing:-0.323px;-webkit-text-stroke:0.27px #5e5e5e;white-space:pre;">and SmartArt graphics change to match your new</div>
</body></html>
